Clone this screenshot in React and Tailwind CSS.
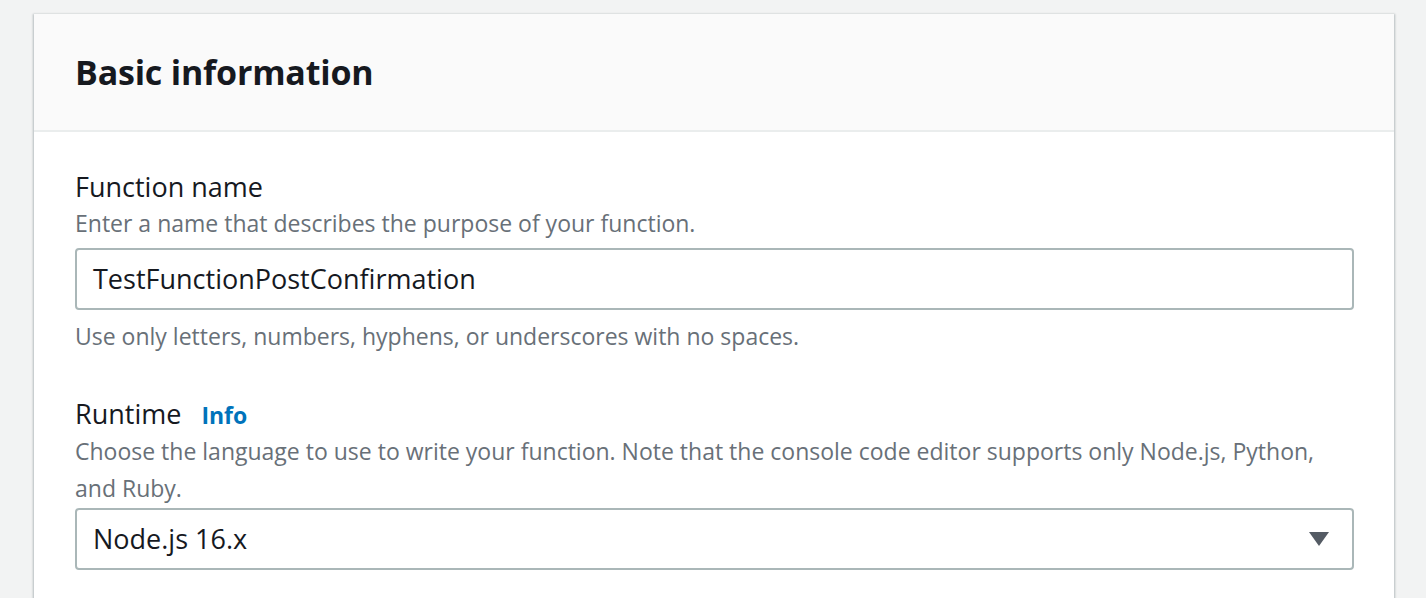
import React from "react";

const FONT = { fontFamily: '"Open Sans", "Liberation Sans", sans-serif' };

const App = () => {
  return (
    <div className="w-[1426px] h-[598px] overflow-hidden bg-[#f2f3f3] pt-[14px] pl-[34px]" style={FONT}>
      <div className="w-[1360px] bg-white shadow-[0_1px_2px_1px_rgba(0,28,36,0.25)] min-h-[700px]">
        <div className="bg-[#fafafa] border-b-2 border-[#eaeded] h-[118px] pl-[41px] flex items-center">
          <h2 className="text-[34px] font-bold text-[#16191f] tracking-[-0.2px]">Basic information</h2>
        </div>
        <div className="pl-[41px] pr-[40px] pt-[36px]">
          <div className="flex flex-col">
            <label className="text-[27px] leading-[38px] text-[#16191f]">Function name</label>
            <p className="text-[23px] leading-[34px] text-[#687078]">Enter a name that describes the purpose of your function.</p>
            <div className="mt-[8px] h-[62px] border-2 border-[#aab7b8] rounded-[4px] flex items-center px-[16px]">
              <span className="text-[27px] text-[#16191f]">TestFunctionPostConfirmation</span>
            </div>
            <p className="mt-[9px] text-[23px] leading-[34px] text-[#687078]">Use only letters, numbers, hyphens, or underscores with no spaces.</p>
          </div>
          <div className="flex flex-col mt-[42px]">
            <div className="flex items-baseline gap-[20px]">
              <label className="text-[27px] leading-[38px] text-[#16191f]">Runtime</label>
              <a className="text-[23px] font-bold text-[#0073bb]">Info</a>
            </div>
            <p className="text-[23px] leading-[37px] text-[#687078] pr-[10px]">
              Choose the language to use to write your function. Note that the console code editor supports only Node.js, Python, and Ruby.
            </p>
            <div className="mt-[1px] h-[62px] border-2 border-[#aab7b8] rounded-[4px] flex items-center justify-between pl-[16px] pr-[22px]">
              <span className="text-[27px] text-[#16191f]">Node.js 16.x</span>
              <svg width="22" height="16" viewBox="0 0 22 16">
                <path d="M1 1 L21 1 L11 15 Z" fill="#545b64" />
              </svg>
            </div>
          </div>
        </div>
      </div>
    </div>
  );
};

export default App;
